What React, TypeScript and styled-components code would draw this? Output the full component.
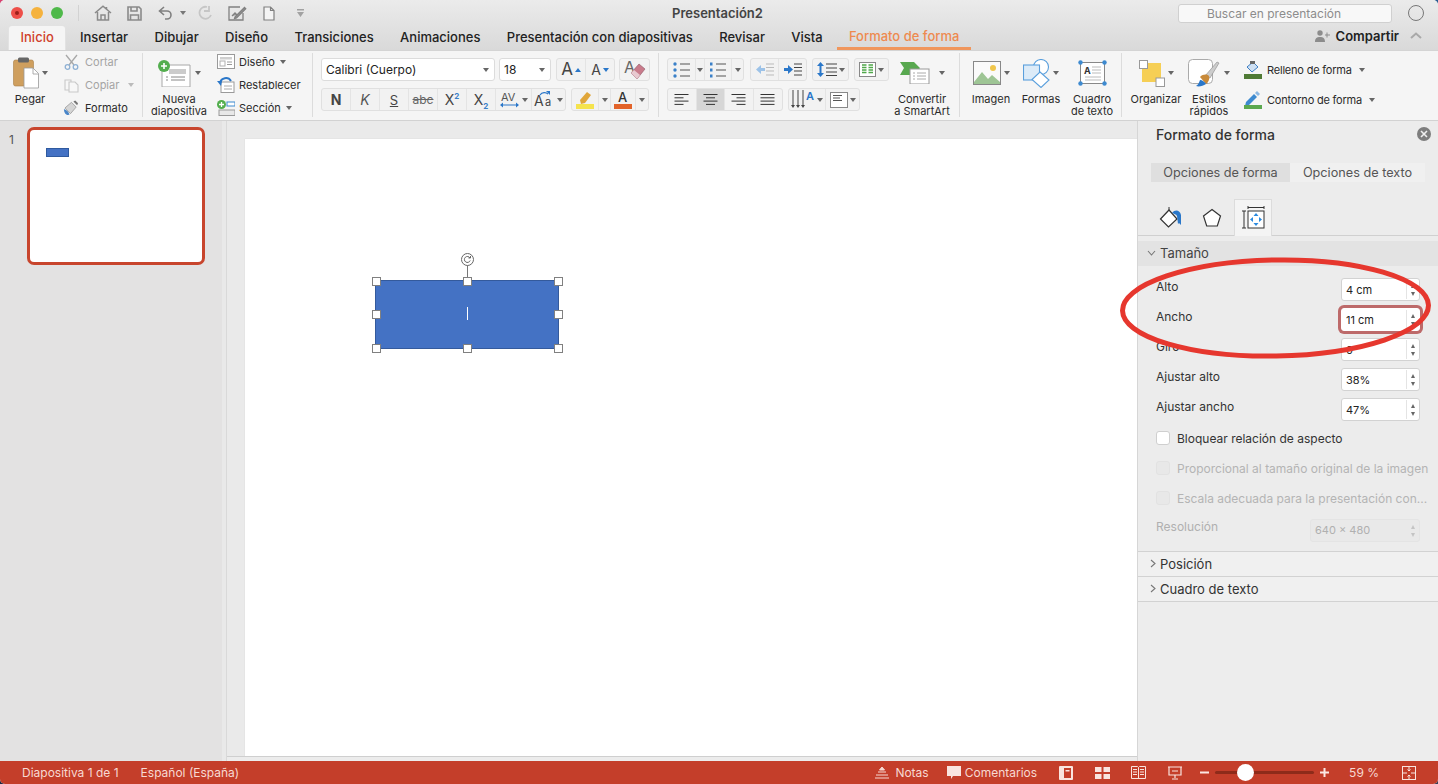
import React from "react";
import styled, { createGlobalStyle } from "styled-components";

const Global = createGlobalStyle`
  html, body { margin: 0; padding: 0; width: 1438px; height: 784px; overflow: hidden;
    background: conic-gradient(#2a5d92 0 25%, #3a3f55 25% 50%, #1d2a44 50% 75%, #d8406f 75% 100%); }
  * { box-sizing: border-box; }
  #root { font-family: Inter, "Liberation Sans", sans-serif; }
`;

const Window = styled.div`
  position: relative; width: 1438px; height: 784px; display: flex; flex-direction: column;
  overflow: hidden; border-radius: 5px; color: #222; background: #ececec;
  font-family: Inter, "Liberation Sans", sans-serif;
`;
const Chrome = styled.div`
  height: 50px; background: linear-gradient(#ebebeb, #d9d9d9); display: flex; flex-direction: column;
`;
const TitleBar = styled.div`
  height: 26px; display: grid; grid-template-columns: 1fr auto 1fr; align-items: center;
`;
const Qat = styled.div`display: flex; align-items: center; padding-left: 11px;`;
const Light = styled.span<{ $c: string; $m?: number }>`
  width: 12px; height: 12px; border-radius: 50%; background: ${p => p.$c}; margin-left: ${p => p.$m ?? 8}px;
  display: flex; align-items: center; justify-content: center;
`;
const Dot = styled.span`width: 4px; height: 4px; border-radius: 50%; background: #9c1f1a;`;
const QatSep = styled.span`width: 1px; height: 16px; background: #d2d2d2; margin: 0 15px 0 15px;`;
const QatItem = styled.span<{ $m?: number }>`display: flex; margin-left: ${p => p.$m ?? 0}px;`;
const DocTitle = styled.div`font-size: 13px; font-weight: 600; color: #444; margin-left: -3px;`;
const TitleRight = styled.div`display: flex; align-items: center; justify-content: flex-end; padding-right: 14px;`;
const Search = styled.div`
  width: 214px; height: 19px; background: #f8f8f8; border: 1px solid #d0d0d0; border-radius: 3px; padding-right: 22px;
  font-size: 12px; color: #8c8c8c; display: flex; align-items: center; justify-content: center;
`;
const Circle = styled.span`
  width: 16px; height: 16px; border-radius: 50%; border: 1.5px solid #777; margin-left: 16px;
`;
const TabBar = styled.div`height: 24px; display: flex; align-items: stretch; padding-left: 9px;`;
const Tab = styled.div<{ $active?: boolean; $ctx?: boolean }>`
  padding: 0 ${p => (p.$ctx ? 12 : p.$active ? 11.5 : 13.2)}px 2px; font-size: 13px; font-weight: 500; display: flex; align-items: center;
  color: ${p => (p.$active ? "#d0402c" : p.$ctx ? "#ee8a4f" : "#222")};
  background: ${p => (p.$active ? "#f5f5f5" : "transparent")};
  border-radius: ${p => (p.$active ? "3px 3px 0 0" : "0")};
  box-shadow: ${p => (p.$active ? "0 0 0 1px #e2e2e2" : "none")};
  border-bottom: ${p => (p.$ctx ? "3px solid #f0965c" : "none")};
  margin-right: ${p => (p.$active ? "1.5px" : "0")};
  margin-left: ${p => (p.$ctx ? "1px" : "0")};
`;
const Share = styled.div`
  margin-left: auto; display: flex; align-items: center; padding: 0 16px 5px 0; font-size: 13px; font-weight: 600; color: #222;
  span { margin-left: 6px; margin-right: 11px; }
`;
const Ribbon = styled.div`
  height: 71px; display: flex; background: #f5f5f5; border-top: 1px solid #d4d4d4; border-bottom: 1px solid #d2d2d2;
  font-size: 11px; color: #2b2b2b; flex: none;
`;
const Group = styled.div<{ $w?: number; $pl?: number; $none?: boolean }>`
  width: ${p => (p.$w ? `${p.$w}px` : "auto")}; padding-left: ${p => p.$pl ?? 0}px; display: flex; flex: none;
  ${p => !p.$none && "border-right: 1px solid; border-image: linear-gradient(transparent 3px, #dcdcdc 3px, #dcdcdc 65px, transparent 65px) 1;"}
`;
const Big = styled.div<{ $w: number; $ml?: number }>`
  width: ${p => p.$w}px; margin-left: ${p => p.$ml ?? 0}px; display: flex; flex-direction: column; align-items: center; flex: none;
`;
const BigIcon = styled.div`height: 42px; display: flex; align-items: center; justify-content: center; gap: 3px; padding-top: 2px;`;
const BigLabel = styled.div`line-height: 12px; text-align: center; white-space: nowrap;`;
const Caret = styled.span<{ $c?: string; $ml?: number }>`
  display: inline-block; width: 0; height: 0; border-left: 3px solid transparent; border-right: 3px solid transparent;
  border-top: 4px solid ${p => p.$c ?? "#666"}; flex: none; margin-left: ${p => p.$ml ?? 0}px;
`;
const SmallList = styled.div<{ $ml: number; $mt?: number }>`
  margin-left: ${p => p.$ml}px; margin-top: ${p => p.$mt ?? -1}px; display: flex; flex-direction: column;
`;
const SmallRow = styled.div<{ $dim?: boolean; $h?: number; $gap?: number; $tight?: boolean }>`
  height: ${p => p.$h ?? 23}px; display: flex; align-items: center; gap: ${p => p.$gap ?? 5}px; white-space: nowrap;
  color: ${p => (p.$dim ? "#a4a4a4" : "#2b2b2b")};
  letter-spacing: ${p => (p.$tight ? "-0.2px" : "0")};
`;
const IconSlot = styled.span<{ $w: number }>`width: ${p => p.$w}px; display: flex; justify-content: center; flex: none;`;
const Rows = styled.div`display: flex; flex-direction: column; gap: 7px; padding-top: 7px;`;
const Row = styled.div`display: flex; gap: 5px; height: 23px;`;
const Combo = styled.div<{ $w: number; $ml?: number }>`
  width: ${p => p.$w}px; margin-left: ${p => p.$ml ?? 0}px; background: #fff; border: 1px solid #dcdcdc; border-radius: 3px; font-size: 12px; color: #222;
  display: flex; align-items: center; justify-content: space-between; padding: 0 5px 0 4px;
`;
const Seg = styled.div<{ $ml?: number }>`
  display: flex; background: #f2f2f2; border: 1px solid #e0e0e0; border-radius: 3px; margin-left: ${p => p.$ml ?? 0}px;
`;
const Cell = styled.div<{ $w: number; $on?: boolean }>`
  width: ${p => p.$w}px; display: flex; align-items: center; justify-content: center; gap: 2px; color: #3c3c3c;
  border-right: 1px solid #e4e4e4; flex: none;
  background: ${p => (p.$on ? "#d6d6d6" : "transparent")};
  &:last-child { border-right: 0; }
`;
const Bold = styled.b`font-size: 14px; font-weight: 700; color: #444;`;
const Ital = styled.i`font-size: 14px; color: #555;`;
const Under = styled.span`font-size: 13px; color: #444; text-decoration: underline;`;
const Strike = styled.span`font-size: 12px; color: #666; text-decoration: line-through;`;
const Glyph = styled.span<{ $s?: number; $c?: string }>`font-size: ${p => p.$s ?? 14}px; color: ${p => p.$c ?? "#444"}; line-height: 1;`;
const Sup = styled.sup`font-size: 8px; color: #3a80c8; font-weight: 700; line-height: 0;`;
const Sub = styled.sub`font-size: 8px; color: #3a80c8; font-weight: 700; line-height: 0;`;
const GrowUp = styled.span`
  width: 0; height: 0; border-left: 3.5px solid transparent; border-right: 3.5px solid transparent; border-bottom: 4px solid #2a77c9;
`;
const GrowDown = styled.span`
  width: 0; height: 0; border-left: 3.5px solid transparent; border-right: 3.5px solid transparent; border-top: 4px solid #2a77c9;
`;

const Main = styled.div`flex: 1; min-height: 0; display: flex;`;
const Thumbs = styled.div`
  flex: none; background: linear-gradient(90deg, #e3e2e2 222px, #e9e9e9 222px); display: flex; padding: 6px 0 0 9px;
  border-right: 1px solid #d9d9d9; width: 227px;
`;
const ThumbNo = styled.div`font-size: 12px; color: #555; margin-top: 5px; width: 18px;`;
const Thumb = styled.div`
  width: 178px; height: 138px; background: #fff; border: 3px solid #c8452d; border-radius: 7px; padding: 18px 0 0 16px;
`;
const MiniShape = styled.div`width: 23px; height: 9px; background: #4472c4; border: 1px solid #2f5a9f;`;
const Canvas = styled.div`flex: 1; min-width: 0; display: flex; flex-direction: column; background: #eaeaea;`;
const CanvasArea = styled.div`
  flex: 1; padding: 18px 0 0 18px; overflow: hidden; border-bottom: 1px solid #cfcfcf;
`;
const Slide = styled.div`position: relative; height: 100%; background: #fff; box-shadow: 0 0 1px #ccc;`;
const Shape = styled.div`
  position: absolute; left: 130px; top: 141px; width: 184px; height: 69px; background: #4472c4; border: 1px solid #345a9c;
`;
const Handle = styled.span<{ $x: number; $y: number }>`
  position: absolute; width: 9px; height: 9px; background: #fff; border: 1px solid #808080;
  left: calc(${p => p.$x}% - 4.5px); top: calc(${p => p.$y}% - 4.5px);
`;
const Caretline = styled.span`position: absolute; left: 50%; top: 26px; width: 1px; height: 13px; background: #fff;`;
const RotLine = styled.span`position: absolute; left: 50%; top: -16px; width: 1px; height: 12px; background: #777;`;
const RotWrap = styled.span`position: absolute; left: calc(50% - 6px); top: -28px; display: flex;`;
const BottomStrip = styled.div`height: 4px; flex: none; background: #ececec;`;

const Panel = styled.div`
  width: 301px; flex: none; background: #ececec; border-left: 1px solid #d6d6d6; display: flex; flex-direction: column;
  font-size: 12px;
`;
const PanelHead = styled.div`
  height: 28px; display: flex; align-items: center; justify-content: space-between; padding: 0 7px 2px 18px;
  font-size: 14px; font-weight: 500; color: #333;
`;
const CloseBtn = styled.span`
  width: 14px; height: 14px; border-radius: 50%; background: #7d7d7d; display: flex; align-items: center; justify-content: center;
`;
const OptTabs = styled.div`display: flex; margin: 14px 0 0 13px; height: 19px;`;
const OptTab = styled.div<{ $on?: boolean; $w: number }>`
  width: ${p => p.$w}px; font-size: 12.7px; color: #555; display: flex; align-items: center; justify-content: center; padding-bottom: 1px;
  background: ${p => (p.$on ? "#dfdfdf" : "#f0f0f0")};
`;
const IconTabs = styled.div`
  margin-top: 17px; height: 37px; display: flex; gap: 3px; padding-left: 14px; border-bottom: 1px solid #d0d0d0;
`;
const IconTab = styled.div<{ $on?: boolean }>`
  width: 38px; height: 37px; display: flex; align-items: center; justify-content: center;
  ${p => p.$on && "background: #f4f4f4; border: 1px solid #dcdcdc; border-bottom: 0;"}
`;
const SectionOpen = styled.div`
  margin-top: 5px; height: 25px; background: #e3e3e3; display: flex; align-items: center; gap: 4px; padding: 0 0 1px 9px;
  font-size: 13px; color: #444;
`;
const Fields = styled.div`padding: 12px 18px 10px 18px; display: flex; flex-direction: column;`;
const Field = styled.div<{ $dim?: boolean }>`
  height: 23px; margin-bottom: 7px; display: flex; justify-content: space-between; color: ${p => (p.$dim ? "#b0b0b0" : "#333")};
  line-height: 18px;
`;
const NumBox = styled.div<{ $focus?: boolean; $dim?: boolean; $w?: number }>`
  width: ${p => p.$w ?? 79}px; height: 23px; background: ${p => (p.$dim ? "#e9e9e9" : "#fff")};
  border: 1px solid ${p => (p.$dim ? "#e4e4e4" : "#d2d2d2")}; border-radius: 3px; display: flex; align-items: center;
  justify-content: space-between; padding-left: 4px; font-size: 11px; color: ${p => (p.$dim ? "#b0b0b0" : "#222")};
  ${p => p.$focus && "box-shadow: 0 0 0 3px #bd6a6a; border-color: #fff;"}
`;
const Spin = styled.span<{ $dim?: boolean }>`
  width: 13px; height: 19px; display: flex; flex-direction: column; align-items: center; justify-content: center; gap: 4px;
  border-left: 1px solid ${p => (p.$dim ? "transparent" : "#e4e4e4")};
`;
const UpTri = styled.span<{ $c?: string }>`
  width: 0; height: 0; border-left: 2.5px solid transparent; border-right: 2.5px solid transparent; border-bottom: 4px solid ${p => p.$c ?? "#666"};
`;
const DownTri = styled.span<{ $c?: string }>`
  width: 0; height: 0; border-left: 2.5px solid transparent; border-right: 2.5px solid transparent; border-top: 4px solid ${p => p.$c ?? "#666"};
`;
const CheckRow = styled.div<{ $dim?: boolean }>`
  height: 20px; margin-bottom: 10px; display: flex; align-items: center; gap: 7px; white-space: nowrap;
  color: ${p => (p.$dim ? "#b4b4b4" : "#333")};
`;
const Box = styled.span<{ $dim?: boolean }>`
  width: 14px; height: 14px; border-radius: 3px; flex: none; background: ${p => (p.$dim ? "#e8e8e8" : "#fff")};
  border: 1px solid ${p => (p.$dim ? "#e2e2e2" : "#cfcfcf")};
`;
const ResRow = styled.div`
  height: 22px; margin-top: 1px; display: flex; justify-content: space-between; color: #b0b0b0; line-height: 15px;
`;
const SectionClosed = styled.div`
  height: 25px; background: #f0f0f0; border-top: 1px solid #d2d2d2; display: flex; align-items: center; gap: 4px; padding: 0 0 1px 12px;
  font-size: 13px; color: #333;
`;
const PanelRest = styled.div`flex: 1; background: #ededed; border-top: 1px solid #d2d2d2;`;

const Status = styled.div`
  height: 23px; flex: none; background: #c43e2a; color: #f7d9d2; font-size: 12px; display: flex; align-items: center; padding: 0 22px;
`;
const StatusText = styled.span<{ $ml?: number }>`margin-left: ${p => p.$ml ?? 0}px; white-space: nowrap;`;
const StatusIcon = styled.span<{ $ml?: number; $auto?: boolean }>`
  display: flex; margin-left: ${p => (p.$auto ? "auto" : `${p.$ml ?? 0}px`)};
`;
const Track = styled.span`
  position: relative; margin-left: 6px; width: 99px; height: 3px; background: #8e2b1a; border-radius: 2px; flex: none;
`;
const Thumbball = styled.span`
  position: absolute; left: 22px; top: -7px; width: 17px; height: 17px; border-radius: 50%; background: #fff;
`;
const Overlay = styled.svg`position: absolute; left: 1110px; top: 250px; pointer-events: none;`;

/* icons */
const IHome = () => (<svg width="18" height="16" viewBox="0 0 18 16" fill="none" stroke="#8a8a8a" strokeWidth="1.5"><path d="M1 8 9 1.2 17 8M3.5 7v8h11V7M7 15v-5h4v5M12.5 2v3" /></svg>);
const ISave = () => (<svg width="15" height="15" viewBox="0 0 15 15" fill="none" stroke="#8a8a8a" strokeWidth="1.6"><path d="M1 1h11l2 2v11H1z" /><path d="M4 1v4h6V1M3.500 14V9h8v5" /></svg>);
const IUndo = ({ c = "#808080" }: { c?: string }) => (<svg width="15" height="14" viewBox="0 0 15 14" fill="none" stroke={c} strokeWidth="1.6"><path d="M6 1 1.500 5 6 9M2 5h7a4 4 0 0 1 0 8H7" /></svg>);
const IRedo = () => (<svg width="16" height="16" viewBox="0 0 16 16" fill="none" stroke="#c6c6c6" strokeWidth="1.8"><path d="M10 2a6 6 0 1 0 4 8M12 1v5H7" /></svg>);
const IEdit = () => (<svg width="19" height="16" viewBox="0 0 19 16" fill="none" stroke="#808080" strokeWidth="1.3"><path d="M15 8v7H1V2h11" /><path d="M4 11l3-3 2 2M7 12 16.500 2.500l1.200 1.200L8.500 13l-2 .5z" fill="#999" /></svg>);
const IDoc = () => (<svg width="12" height="15" viewBox="0 0 12 15" fill="#f4f4f4" stroke="#808080" strokeWidth="1.2"><path d="M1 1h6.500L11 4.500V14H1zM7.500 1v3.500H11" /></svg>);
const ICust = () => (<svg width="7" height="8" viewBox="0 0 7 8"><path d="M0 0h7v1.500H0zM0 3h7L3.500 8z" fill="#a2a2a2" /></svg>);
const IShare = () => (<svg width="15" height="12" viewBox="0 0 15 12" fill="#8c8c8c"><circle cx="5" cy="3" r="2.700" /><path d="M0 12c0-4 2-5 5-5s5 1 5 5zM10 4.500h1.500V2.500h1v2H15v1h-2.500v2h-1v-2H10z" /></svg>);
const IChevUp = () => (<svg width="12" height="7" viewBox="0 0 12 7" fill="none" stroke="#a9a9a9" strokeWidth="2"><path d="M1 6 6 1.500 11 6" /></svg>);
const IPaste = () => (<svg width="26" height="32" viewBox="0 0 26 32"><rect x="0.500" y="3" width="20" height="26" rx="2" fill="#cf9f5e" stroke="#a97e44" strokeWidth=".6" /><rect x="5" y="0.500" width="11" height="5" rx="1.500" fill="#666" /><path d="M11 11h9l5.500 5.500V31H11z" fill="#fff" stroke="#999" strokeWidth=".8" /><path d="M20 11v6h5.500" fill="none" stroke="#999" strokeWidth=".8" /></svg>);
const ICut = () => (<svg width="15" height="16" viewBox="0 0 15 16" fill="none" stroke="#a8a8a8" strokeWidth="1.300"><path d="M2 1 10 11M13 1 5 11" /><circle cx="3.500" cy="13" r="2.300" stroke="#8fb1d4" /><circle cx="11.500" cy="13" r="2.300" stroke="#8fb1d4" /></svg>);
const ICopy = () => (<svg width="15" height="16" viewBox="0 0 15 16" fill="#f7f7f7" stroke="#c9c9c9" strokeWidth="1.100"><path d="M1 3h6v10H1z" /><path d="M5 5h6l3 3v7H5z" /></svg>);
const IBrush = () => (<svg width="17" height="16" viewBox="0 0 17 16"><path d="M1 9c3 1 5 3 6 6-2 1-6 0-6-6z" fill="#4a86c8" /><path d="M2 8 9 2l5 5-6 7z" fill="#d5d5d5" stroke="#8a8a8a" strokeWidth=".7" /><path d="M11 1l2-1 3 3-1 2z" fill="#777" /></svg>);
const INew = () => (<svg width="34" height="27" viewBox="0 0 34 27"><path d="M4 5h28v22H4z" fill="#fff" stroke="#a8a8a8" /><rect x="11" y="9" width="17" height="5" fill="#ccc" /><path d="M8 17h2M13 17h14M8 20h2M13 20h14" stroke="#888" /><circle cx="6" cy="6" r="6" fill="#53ae4e" /><path d="M6 3v6M3 6h6" stroke="#fff" strokeWidth="1.600" /></svg>);
const ILayout = () => (<svg width="18" height="15" viewBox="0 0 18 15" fill="#fff" stroke="#9a9a9a"><rect x=".5" y=".5" width="17" height="14" /><rect x="3" y="3" width="12" height="2.500" fill="#cfcfcf" stroke="none" /><rect x="3" y="7" width="5" height="5" fill="none" stroke="#b0b0b0" /><path d="M10 8h5M10 10.500h5" /></svg>);
const IReset = () => (<svg width="18" height="17" viewBox="0 0 18 17"><rect x="4" y="6" width="13" height="10.500" fill="#fff" stroke="#9a9a9a" /><path d="M7 10h8M7 13h8" stroke="#aaa" /><path d="M3 7a6 6 0 0 1 11-2" fill="none" stroke="#2a77c9" strokeWidth="2" /><path d="M0 5l5 0-1 5z" fill="#2a77c9" /></svg>);
const ISection = () => (<svg width="18" height="16" viewBox="0 0 18 16"><circle cx="4.500" cy="4.500" r="4.500" fill="#53ae4e" /><path d="M4.500 2v5M2 4.500h5" stroke="#fff" strokeWidth="1.300" /><rect x="10" y="2" width="8" height="4" fill="#fff" stroke="#3d8ad0" /><rect x="2" y="10" width="16" height="5.500" fill="#e8e8e8" stroke="#9a9a9a" /></svg>);
const IGrow = ({ big }: { big?: boolean }) => (<Glyph $s={big ? 17 : 14} $c="#444">A</Glyph>);
const IEraser = () => (<svg width="23" height="20" viewBox="0 0 23 20" overflow="visible"><text x="1" y="13" fontSize="16" fill="#666" fontFamily="Inter">A</text><path d="M8 13 16 4l6 5-8 10z" fill="#c97b8b" stroke="#8d5866" strokeWidth=".6" /><path d="M8 13l3-3 6 5-3 4z" fill="#e8c9d0" /></svg>);
const IBullets = ({ num }: { num?: boolean }) => (<svg width="18" height="16" viewBox="0 0 18 16">{[2, 8, 14].map(y => num ? <rect key={y} x="1" y={y - 1.5} width="2.500" height="3" fill="#3a80c8" /> : <circle key={y} cx="2" cy={y} r="1.700" fill="#3a80c8" />)}<path d="M7 2h10M7 8h10M7 14h10" stroke="#555" /></svg>);
const IIndent = ({ dir }: { dir: "l" | "r" }) => (<svg width="18" height="13" viewBox="0 0 18 13"><path d={dir === "l" ? "M0 6.500 5 2v3h4v3H5v3z" : "M9 6.500 4 2v3H0v3h4v3z"} fill={dir === "l" ? "#9cc2e8" : "#2a77c9"} /><path d="M10 1h8M10 4.500h8M10 8h8M10 12h8" stroke={dir === "l" ? "#bbb" : "#444"} /></svg>);
const ILineSp = () => (<svg width="20" height="15" viewBox="0 0 20 15"><path d="M3.500 0 7 4H0zM3.500 15 7 11H0z" fill="#2a77c9" /><rect x="2.500" y="4" width="2" height="7" fill="#2a77c9" /><path d="M9 2h11M9 6h11M9 10h11M9 13.500h11" stroke="#444" /></svg>);
const IColumns = () => (<svg width="17" height="15" viewBox="0 0 17 15" fill="#fff" stroke="#888"><rect x=".5" y=".5" width="16" height="14" /><path d="M3 3h4.500M3 5.500h4.500M3 8h4.500M3 10.500h4.500M9.500 3H14M9.500 5.500H14M9.500 8H14M9.500 10.500H14" stroke="#4fa84a" strokeWidth="1.500" /></svg>);
const IAlign = ({ k }: { k: "l" | "c" | "r" | "j" }) => {
  const ws = k === "j" ? [14, 14, 14, 14] : [14, 9, 14, 9];
  return (<svg width="15" height="11" viewBox="0 0 15 11" stroke="#333">{ws.map((w, i) => { const x = k === "l" || k === "j" ? 0.5 : k === "r" ? 14.5 - w : 7.5 - w / 2; return <path key={i} d={`M${x} ${i * 3.3 + .5}h${w}`} />; })}</svg>);
};
const ITextDir = () => (<svg width="24" height="19" viewBox="0 0 24 19"><path d="M2 0v16M7 0v16M12 0v16" stroke="#444" /><path d="M0 15l2 3 2-3zM5 15l2 3 2-3zM10 15l2 3 2-3z" fill="#444" /><text x="15" y="10" fontSize="11" fontWeight="600" fill="#2a77c9" fontFamily="Inter">A</text></svg>);
const ITextAlign = () => (<svg width="18" height="16" viewBox="0 0 18 16" fill="#fff" stroke="#888"><rect x=".5" y=".5" width="17" height="15" /><path d="M3 3.500h9M3 6h7M3 8.500h9" stroke="#555" /></svg>);
const ISmartArt = () => (<svg width="36" height="22" viewBox="0 0 36 22"><path d="M0 0h14l6 6-5 7H0l4-7z" fill="#58a84f" /><rect x="10" y="7" width="19" height="15" fill="#fff" stroke="#999" /><path d="M13 11h2M17 11h9M13 14h2M17 14h9M13 17h2M17 17h9" stroke="#aaa" /></svg>);
const IImage = () => (<svg width="28" height="24" viewBox="0 0 28 24"><rect x=".5" y=".5" width="27" height="23" fill="#fafafa" stroke="#888" /><path d="M1 21 9 11l6 7 4-4 8 7v2H1z" fill="#9ec595" /><circle cx="20" cy="7" r="3" fill="#f0c64c" /></svg>);
const IShapes = () => (<svg width="27" height="29" viewBox="0 0 27 29" fill="none" stroke="#5a9fdc" strokeWidth="1.100"><circle cx="18" cy="8" r="7.500" fill="#fff" /><rect x=".5" y="6" width="16" height="15" fill="#dcebf8" /><path d="M17 13l9 8-8 7.500-9-8z" fill="#fff" /></svg>);
const ITextBox = () => (<svg width="29" height="26" viewBox="0 0 29 26"><rect x="2.500" y="2.500" width="24" height="21" fill="#fff" stroke="#888" /><text x="6" y="14" fontSize="9" fontWeight="700" fill="#333" fontFamily="Inter">A</text><path d="M14 7h9M14 10h9M14 13h9M7 17h16M7 20h16" stroke="#bbb" />{[[2.5, 2.5], [26.5, 2.500], [2.500, 23.500], [26.500, 23.500]].map(([x, y]) => <circle key={x * y} cx={x} cy={y} r="2.200" fill="#3d8ad0" />)}</svg>);
const IArrange = () => (<svg width="26" height="27" viewBox="0 0 26 27"><rect x="3" y="3" width="19" height="19" fill="#f6cf55" /><rect x=".5" y=".5" width="8" height="8" fill="#fff" stroke="#999" /><rect x="17" y="18" width="8.500" height="8.500" fill="#fff" stroke="#999" /></svg>);
const IStyles = () => (<svg width="33" height="28" viewBox="0 0 33 28"><rect x=".5" y=".5" width="24" height="24" rx="4" fill="#fff" stroke="#aaa" /><path d="M17 17 29 3l2 1-9 15z" fill="#ccc" stroke="#888" strokeWidth=".6" /><path d="M12 18c3-3 7-3 9-1 1 3-1 7-3 8z" fill="#c88a3a" /><path d="M8 27c2-1 3-3 4-6 2 0 5 2 6 4-3 2-7 3-10 2z" fill="#2a77c9" /></svg>);
const IFill = () => (<svg width="18" height="18" viewBox="0 0 18 18"><path d="M3 6 9 1l5 5-6 5z" fill="#cfe0f2" stroke="#3d7ec4" /><path d="M6 0h5v3H6z" fill="#666" /><rect y="13" width="18" height="5" fill="#4f7a35" /></svg>);
const IPen = () => (<svg width="18" height="18" viewBox="0 0 18 18"><path d="M2 11 10 3l3 3-8 8-4 1z" fill="#3d8ad0" /><path d="M11 2l2-2 3 3-2 2z" fill="#8cb8e2" /><rect y="14" width="18" height="4" fill="#5ba84f" /></svg>);
const IPaint = () => (<svg width="24" height="24" viewBox="0 0 24 24"><path d="M1.500 13 10 4l8 9-8.500 8z" fill="#fff" stroke="#333" strokeWidth="1.200" /><path d="M10 4V1" stroke="#333" /><path d="M13 7c3-4 8-3 9 2v10l-2-2-1 1-1-8c-1-2-3-2-5-3z" fill="#2a77c9" /></svg>);
const IPenta = () => (<svg width="20" height="20" viewBox="0 0 20 20" fill="#fff" stroke="#333" strokeWidth="1.200"><path d="M10 1.500 18.500 8 15.300 18H4.700L1.500 8z" /></svg>);
const ISizeIcon = () => (<svg width="24" height="24" viewBox="0 0 24 24"><rect x="7" y="5" width="16" height="17" fill="#fff" stroke="#333" /><path d="M7 1.500h16M7 0v3M23 0v3M1 5h4M1 22h4M3 5v17" stroke="#333" fill="none" /><path d="M15 7l-2.500 3h5zM15 20l-2.500-3h5zM9 13.500l3-2.500v5zM21 13.500l-3-2.500v5z" fill="#2a8ae0" /></svg>);
const IChevDown = () => (<svg width="9" height="6" viewBox="0 0 9 6" fill="none" stroke="#777" strokeWidth="1.100"><path d="M1 1 4.500 5 8 1" /></svg>);
const IChevRight = () => (<svg width="6" height="9" viewBox="0 0 6 9" fill="none" stroke="#777" strokeWidth="1.100"><path d="M1 1 5 4.500 1 8" /></svg>);
const IX = () => (<svg width="8" height="8" viewBox="0 0 8 8" stroke="#eee" strokeWidth="1.600"><path d="M1 1l6 6M7 1 1 7" /></svg>);
const IRot = () => (<svg width="13" height="13" viewBox="0 0 13 13" fill="#fff" stroke="#666"><circle cx="6.500" cy="6.500" r="6" /><path d="M9 5a3 3 0 1 0 .2 2.500" fill="none" /><path d="M7.500 5H9.500V3" fill="none" /></svg>);
const INotes = () => (<svg width="14" height="12" viewBox="0 0 14 12" stroke="#f7d9d2" fill="none"><path d="M7 0 4.500 3h5z" fill="#f7d9d2" /><path d="M3 5h8M1 8h12M0 11h14" /></svg>);
const IComment = () => (<svg width="14" height="13" viewBox="0 0 14 13" fill="#f9e4df"><path d="M0 0h14v10H6l-2 3v-3H0z" /></svg>);
const INormalV = () => (<svg width="14" height="14" viewBox="0 0 14 14"><rect x="0" y="0" width="14" height="14" rx="1" fill="#f9e4df" /><rect x="5" y="2" width="7" height="10" fill="#c43e2a" /><rect x="6.500" y="4" width="4" height="1.500" fill="#f9e4df" /></svg>);
const IGrid = () => (<svg width="15" height="12" viewBox="0 0 15 12" fill="#f9e4df"><rect width="6.500" height="5" /><rect x="8.500" width="6.500" height="5" /><rect y="7" width="6.500" height="5" /><rect x="8.500" y="7" width="6.500" height="5" /></svg>);
const IBook = () => (<svg width="15" height="13" viewBox="0 0 15 13" fill="none" stroke="#f9e4df"><path d="M.5.500h6l1 1 1-1h6v12h-14zM7.500 1.500v11M2 3.500h4M2 6h4M2 8.500h4M9 3.500h4M9 6h4M9 8.500h4" /></svg>);
const IPresent = () => (<svg width="14" height="14" viewBox="0 0 14 14" fill="none" stroke="#f9e4df" strokeWidth="1.200"><path d="M0 1h14M1 1v8h12V1M7 9v3M4 13h6M4 5h6" /></svg>);
const IMinus = () => (<svg width="9" height="9" viewBox="0 0 9 9"><rect y="3.500" width="9" height="2" fill="#fbe8e3" /></svg>);
const IPlus = () => (<svg width="9" height="9" viewBox="0 0 9 9" fill="#fbe8e3"><rect y="3.500" width="9" height="2" /><rect x="3.500" width="2" height="9" /></svg>);
const IFit = () => (<svg width="14" height="14" viewBox="0 0 14 14" fill="none" stroke="#f9e4df"><rect x=".5" y=".5" width="13" height="13" /><path d="M7 1v4M5.500 3.500 7 5l1.500-1.500M7 13V9M5.500 10.500 7 9l1.500 1.500M1 7h4M9 7h4" /></svg>);
const ICase = () => (<svg width="21" height="17" viewBox="0 0 21 17"><text x="0" y="15" fontSize="14" fill="#444" fontFamily="Inter">A</text><text x="11" y="15" fontSize="11" fill="#444" fontFamily="Inter">a</text><path d="M6 4c2-3 6-3 8-1" fill="none" stroke="#2a77c9" strokeWidth="1.300" /><path d="M12 0h4v4z" fill="#2a77c9" /></svg>);
const ISpacing = () => (<svg width="20" height="17" viewBox="0 0 20 17"><text x="1" y="10" fontSize="11" fill="#555" fontFamily="Inter">AV</text><path d="M1 14h17" stroke="#2a77c9" /><path d="M0 14l3-2.500v5zM19 14l-3-2.500v5z" fill="#2a77c9" /></svg>);
const IMarker = () => (<svg width="18" height="19" viewBox="0 0 18 19"><path d="M4 10 11 2l4 3-6 8-4 1z" fill="#e0a63a" /><rect y="14" width="18" height="5" fill="#f5e34d" /></svg>);
const IFontColor = () => (<svg width="18" height="19" viewBox="0 0 18 19"><text x="4" y="12" fontSize="13" fontWeight="500" fill="#333" fontFamily="Inter">A</text><rect y="14" width="18" height="5" fill="#e2632a" /></svg>);

const Spinner = ({ dim }: { dim?: boolean }) => (
  <Spin $dim={dim}><UpTri $c={dim ? "#c4c4c4" : undefined} /><DownTri $c={dim ? "#c4c4c4" : undefined} /></Spin>
);

const handles: [number, number][] = [[0, 0], [50, 0], [100, 0], [0, 50], [100, 50], [0, 100], [50, 100], [100, 100]];

export default function App() {
  return (
    <Window>
      <Global />
      <Chrome>
        <TitleBar>
          <Qat>
            <Light $c="#ee4f49" $m={0}><Dot /></Light>
            <Light $c="#f5b23d" />
            <Light $c="#4fb94a" />
            <QatSep />
            <QatItem><IHome /></QatItem>
            <QatItem $m={15}><ISave /></QatItem>
            <QatItem $m={16}><IUndo /></QatItem>
            <QatItem $m={7}><Caret $c="#777" /></QatItem>
            <QatItem $m={11}><IRedo /></QatItem>
            <QatItem $m={15}><IEdit /></QatItem>
            <QatItem $m={16}><IDoc /></QatItem>
            <QatItem $m={22}><ICust /></QatItem>
          </Qat>
          <DocTitle>Presentación2</DocTitle>
          <TitleRight>
            <Search>Buscar en presentación</Search>
            <Circle />
          </TitleRight>
        </TitleBar>
        <TabBar>
          <Tab $active>Inicio</Tab>
          <Tab>Insertar</Tab>
          <Tab>Dibujar</Tab>
          <Tab>Diseño</Tab>
          <Tab>Transiciones</Tab>
          <Tab>Animaciones</Tab>
          <Tab>Presentación con diapositivas</Tab>
          <Tab>Revisar</Tab>
          <Tab>Vista</Tab>
          <Tab $ctx>Formato de forma</Tab>
          <Share><IShare /><span>Compartir</span><IChevUp /></Share>
        </TabBar>
      </Chrome>
      <Ribbon>
        <Group $w={143} $pl={10}>
          <Big $w={40}>
            <BigIcon><IPaste /><Caret /></BigIcon>
            <BigLabel>Pegar</BigLabel>
          </Big>
          <SmallList $ml={13}>
            <SmallRow $dim $gap={6}><IconSlot $w={16}><ICut /></IconSlot>Cortar</SmallRow>
            <SmallRow $dim $gap={6}><IconSlot $w={16}><ICopy /></IconSlot>Copiar&nbsp;<Caret $c="#bbb" /></SmallRow>
            <SmallRow $gap={6}><IconSlot $w={16}><IBrush /></IconSlot>Formato</SmallRow>
          </SmallList>
        </Group>
        <Group $w={170} $pl={7}>
          <Big $w={58}>
            <BigIcon><INew /><Caret /></BigIcon>
            <BigLabel>Nueva<br />diapositiva</BigLabel>
          </Big>
          <SmallList $ml={9}>
            <SmallRow $gap={4}><IconSlot $w={18}><ILayout /></IconSlot>Diseño<Caret $ml={1} /></SmallRow>
            <SmallRow $gap={4}><IconSlot $w={18}><IReset /></IconSlot>Restablecer</SmallRow>
            <SmallRow $gap={4}><IconSlot $w={18}><ISection /></IconSlot>Sección<Caret $ml={1} /></SmallRow>
          </SmallList>
        </Group>
        <Group $w={346} $pl={8}>
          <Rows>
            <Row>
              <Combo $w={174}>Calibri (Cuerpo)<Caret /></Combo>
              <Combo $w={52} $ml={-1}>18<Caret /></Combo>
              <Seg>
                <Cell $w={29}><IGrow big /><GrowUp /></Cell>
                <Cell $w={28}><IGrow /><GrowDown /></Cell>
              </Seg>
              <Seg $ml={-1}><Cell $w={29}><IEraser /></Cell></Seg>
            </Row>
            <Row>
              <Seg>
                <Cell $w={29}><Bold>N</Bold></Cell>
                <Cell $w={29}><Ital>K</Ital></Cell>
                <Cell $w={29}><Under>S</Under></Cell>
                <Cell $w={29}><Strike>abc</Strike></Cell>
                <Cell $w={29}><Glyph>X<Sup>2</Sup></Glyph></Cell>
                <Cell $w={29}><Glyph>X<Sub>2</Sub></Glyph></Cell>
                <Cell $w={36}><ISpacing /><Caret /></Cell>
                <Cell $w={33}><ICase /><Caret /></Cell>
              </Seg>
              <Seg>
                <Cell $w={27}><IMarker /></Cell>
                <Cell $w={12}><Caret /></Cell>
                <Cell $w={25}><IFontColor /></Cell>
                <Cell $w={12}><Caret /></Cell>
              </Seg>
            </Row>
          </Rows>
        </Group>
        <Group $w={301} $pl={8}>
          <Rows>
            <Row>
              <Seg>
                <Cell $w={28}><IBullets /></Cell>
                <Cell $w={9}><Caret /></Cell>
                <Cell $w={27}><IBullets num /></Cell>
                <Cell $w={11}><Caret /></Cell>
              </Seg>
              <Seg $ml={1}>
                <Cell $w={28}><IIndent dir="l" /></Cell>
                <Cell $w={27}><IIndent dir="r" /></Cell>
              </Seg>
              <Seg><Cell $w={35}><ILineSp /><Caret /></Cell></Seg>
              <Seg><Cell $w={33}><IColumns /><Caret /></Cell></Seg>
            </Row>
            <Row>
              <Seg>
                <Cell $w={28.5}><IAlign k="l" /></Cell>
                <Cell $w={28.5} $on><IAlign k="c" /></Cell>
                <Cell $w={28.5}><IAlign k="r" /></Cell>
                <Cell $w={28.5}><IAlign k="j" /></Cell>
              </Seg>
              <Seg>
                <Cell $w={37}><ITextDir /><Caret /></Cell>
                <Cell $w={33}><ITextAlign /><Caret /></Cell>
              </Seg>
            </Row>
          </Rows>
          <Big $w={58} $ml={4}>
            <BigIcon><ISmartArt /><Caret /></BigIcon>
            <BigLabel>Convertir<br />a SmartArt</BigLabel>
          </Big>
        </Group>
        <Group $w={162} $pl={11}>
          <Big $w={40}>
            <BigIcon><IImage /><Caret /></BigIcon>
            <BigLabel>Imagen</BigLabel>
          </Big>
          <Big $w={48} $ml={6}>
            <BigIcon><IShapes /><Caret /></BigIcon>
            <BigLabel>Formas</BigLabel>
          </Big>
          <Big $w={40} $ml={7}>
            <BigIcon><ITextBox /></BigIcon>
            <BigLabel>Cuadro<br />de texto</BigLabel>
          </Big>
        </Group>
        <Group $pl={9} $none>
          <Big $w={50}>
            <BigIcon><IArrange /><Caret /></BigIcon>
            <BigLabel>Organizar</BigLabel>
          </Big>
          <Big $w={40} $ml={8}>
            <BigIcon><IStyles /><Caret /></BigIcon>
            <BigLabel>Estilos<br />rápidos</BigLabel>
          </Big>
          <SmallList $ml={15} $mt={4}>
            <SmallRow $h={30} $gap={5} $tight><IFill />Relleno de forma<Caret $ml={2} /></SmallRow>
            <SmallRow $h={30} $gap={5} $tight><IPen />Contorno de forma<Caret $ml={2} /></SmallRow>
          </SmallList>
        </Group>
      </Ribbon>
      <Main>
        <Thumbs>
          <ThumbNo>1</ThumbNo>
          <Thumb><MiniShape /></Thumb>
        </Thumbs>
        <Canvas>
          <CanvasArea>
            <Slide>
              <Shape>
                <RotLine />
                <RotWrap><IRot /></RotWrap>
                <Caretline />
                {handles.map(([x, y]) => <Handle key={`${x}-${y}`} $x={x} $y={y} />)}
              </Shape>
            </Slide>
          </CanvasArea>
          <BottomStrip />
        </Canvas>
        <Panel>
          <PanelHead>Formato de forma<CloseBtn><IX /></CloseBtn></PanelHead>
          <OptTabs>
            <OptTab $on $w={139}>Opciones de forma</OptTab>
            <OptTab $w={135}>Opciones de texto</OptTab>
          </OptTabs>
          <IconTabs>
            <IconTab><IPaint /></IconTab>
            <IconTab><IPenta /></IconTab>
            <IconTab $on><ISizeIcon /></IconTab>
          </IconTabs>
          <SectionOpen><IChevDown />Tamaño</SectionOpen>
          <Fields>
            <Field>Alto<NumBox>4 cm<Spinner /></NumBox></Field>
            <Field>Ancho<NumBox $focus>11 cm<Spinner /></NumBox></Field>
            <Field>Giro<NumBox>0°<Spinner /></NumBox></Field>
            <Field>Ajustar alto<NumBox>38%<Spinner /></NumBox></Field>
            <Field>Ajustar ancho<NumBox>47%<Spinner /></NumBox></Field>
            <CheckRow><Box />Bloquear relación de aspecto</CheckRow>
            <CheckRow $dim><Box $dim />Proporcional al tamaño original de la imagen</CheckRow>
            <CheckRow $dim><Box $dim />Escala adecuada para la presentación con...</CheckRow>
            <ResRow>Resolución<NumBox $dim $w={110}>640 × 480<Spinner dim /></NumBox></ResRow>
          </Fields>
          <SectionClosed><IChevRight />Posición</SectionClosed>
          <SectionClosed><IChevRight />Cuadro de texto</SectionClosed>
          <PanelRest />
        </Panel>
      </Main>
      <Status>
        <StatusText>Diapositiva 1 de 1</StatusText>
        <StatusText $ml={22}>Español (España)</StatusText>
        <StatusIcon $auto><INotes /></StatusIcon>
        <StatusText $ml={6}>Notas</StatusText>
        <StatusIcon $ml={18}><IComment /></StatusIcon>
        <StatusText $ml={4}>Comentarios</StatusText>
        <StatusIcon $ml={22}><INormalV /></StatusIcon>
        <StatusIcon $ml={22}><IGrid /></StatusIcon>
        <StatusIcon $ml={21}><IBook /></StatusIcon>
        <StatusIcon $ml={22}><IPresent /></StatusIcon>
        <StatusIcon $ml={18}><IMinus /></StatusIcon>
        <Track><Thumbball /></Track>
        <StatusIcon $ml={6}><IPlus /></StatusIcon>
        <StatusText $ml={20}>59 %</StatusText>
        <StatusIcon $ml={23}><IFit /></StatusIcon>
      </Status>
      <Overlay width="328" height="116" viewBox="0 0 328 116">
        <ellipse cx="165.500" cy="58" rx="153" ry="48" fill="none" stroke="#e6372e" strokeWidth="5" transform="rotate(-1 165.500 58)" />
      </Overlay>
    </Window>
  );
}
